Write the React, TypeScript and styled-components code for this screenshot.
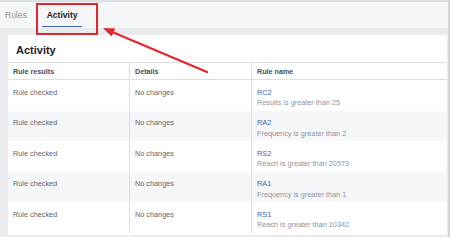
import React from "react";
import styled, { createGlobalStyle } from "styled-components";

const GlobalStyle = createGlobalStyle`
  html, body {
    margin: 0;
    padding: 0;
    background: #e9ebee;
  }
  body {
    font-family: "Liberation Sans", Arial, sans-serif;
  }
`;

type Row = {
  result: string;
  details: string;
  name: string;
  condition: string;
};

const rows: Row[] = [
  { result: "Rule checked", details: "No changes", name: "RC2", condition: "Results is greater than 25" },
  { result: "Rule checked", details: "No changes", name: "RA2", condition: "Frequency is greater than 2" },
  { result: "Rule checked", details: "No changes", name: "RS2", condition: "Reach is greater than 20573" },
  { result: "Rule checked", details: "No changes", name: "RA1", condition: "Frequency is greater than 1" },
  { result: "Rule checked", details: "No changes", name: "RS1", condition: "Reach is greater than 10342" },
];

export default function App() {
  return (
    <>
      <GlobalStyle />
      <Frame>
        <TabBar>
          <Tab>Rules</Tab>
          <Tab active>Activity</Tab>
        </TabBar>
        <Content>
          <Card>
            <CardTitle>Activity</CardTitle>
            <Table>
              <HeadCell>Rule results</HeadCell>
              <HeadCell divided>Details</HeadCell>
              <HeadCell divided>Rule name</HeadCell>
              {rows.map((r, i) => (
                <React.Fragment key={r.name}>
                  <Cell striped={i % 2 === 1}>{r.result}</Cell>
                  <Cell striped={i % 2 === 1} divided>
                    {r.details}
                  </Cell>
                  <Cell striped={i % 2 === 1} divided>
                    <RuleLink>{r.name}</RuleLink>
                    <RuleCondition>{r.condition}</RuleCondition>
                  </Cell>
                </React.Fragment>
              ))}
            </Table>
          </Card>
        </Content>
        <Highlight />
        <Arrow width="450" height="237" viewBox="0 0 450 237">
          <line x1="207" y1="72" x2="111" y2="31.5" stroke="#e5252a" strokeWidth="2.2" strokeLinecap="round" />
          <polygon points="103,28 115.2,28.4 111.6,36.6" fill="#e5252a" />
        </Arrow>
      </Frame>
    </>
  );
}

const Frame = styled.div`
  position: relative;
  width: 450px;
  height: 237px;
  box-sizing: border-box;
  border-top: 2px solid #dcdfe3;
  border-right: 2px solid #d2d5da;
  background: #e9ebee;
  overflow: hidden;
  display: flex;
  flex-direction: column;
`;

const TabBar = styled.div`
  height: 26px;
  box-sizing: border-box;
  display: flex;
  align-items: stretch;
  gap: 15px;
  padding: 0 0 1.5px 5px;
  background: #f5f6f7;
`;

const Tab = styled.div<{ active?: boolean }>`
  display: flex;
  align-items: center;
  padding: 2px ${({ active }) => (active ? "5px" : "0")} 0;
  font-size: 8.5px;
  font-weight: ${({ active }) => (active ? 700 : 400)};
  color: ${({ active }) => (active ? "#1d2129" : "#90949c")};
  border-bottom: 1.5px solid ${({ active }) => (active ? "#4267b2" : "transparent")};
`;

const Content = styled.div`
  flex: 1;
  display: flex;
  padding: 7px 1px 2px 8px;
`;

const Card = styled.div`
  flex: 1;
  background: #fff;
  display: flex;
  flex-direction: column;
`;

const CardTitle = styled.div`
  height: 27px;
  box-sizing: border-box;
  display: flex;
  align-items: center;
  padding: 2px 0 0 8px;
  font-size: 11px;
  font-weight: 700;
  color: #1d2129;
`;

const Table = styled.div`
  display: grid;
  grid-template-columns: 121px 122px 1fr;
  border-top: 1px solid #dddfe2;
`;

const HeadCell = styled.div<{ divided?: boolean }>`
  height: 17px;
  box-sizing: border-box;
  display: flex;
  align-items: center;
  padding: 1px 0 0 5px;
  border-left: ${({ divided }) => (divided ? "1px solid #dddfe2" : "none")};
  border-bottom: 1px solid #dddfe2;
  font-size: 7.2px;
  font-weight: 700;
  color: #4b4f56;
`;

const Cell = styled.div<{ striped?: boolean; divided?: boolean }>`
  height: 30.6px;
  box-sizing: border-box;
  padding: 7.5px 0 0 5px;
  background: ${({ striped }) => (striped ? "#f6f7f9" : "#fff")};
  border-left: ${({ divided }) => (divided ? "1px solid #dddfe2" : "none")};
  font-size: 7.3px;
  line-height: 10.5px;
  color: #606770;
`;

const RuleLink = styled.div`
  color: #4267b2;
`;

const RuleCondition = styled.div`
  color: #90949c;
`;

const Highlight = styled.div`
  position: absolute;
  left: 36px;
  top: 1px;
  width: 62px;
  height: 32px;
  box-sizing: border-box;
  border: 2px solid #e3262b;
`;

const Arrow = styled.svg`
  position: absolute;
  left: 0;
  top: -2px;
  pointer-events: none;
`;
